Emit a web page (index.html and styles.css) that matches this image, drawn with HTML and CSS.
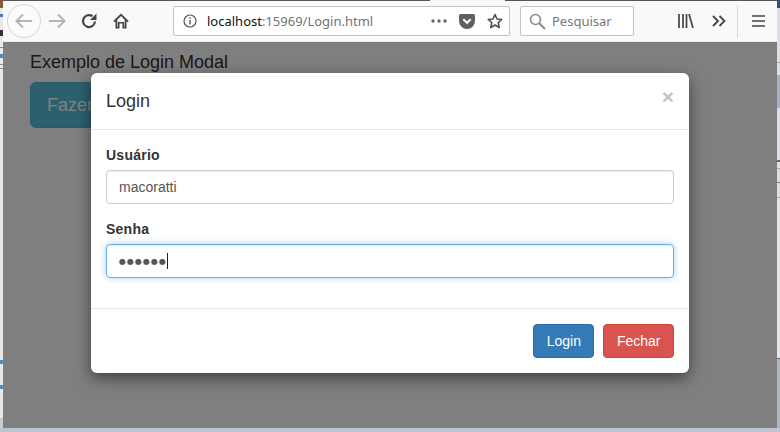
FILE: index.html
```html
<!DOCTYPE html>
<html lang="en">
<head>
  <meta charset="UTF-8" />
  <title>Login Modal</title>
  <link rel="stylesheet" href="styles.css">
</head>
<body>
  <div class="screen">
    <div class="edge-left"></div>

    <div class="window">
      <!-- browser toolbar -->
      <div class="tabline"><div class="tabline-tab"></div></div>
      <div class="toolbar">
        <div class="nav">
          <span class="back">
            <svg width="18" height="16" viewBox="0 0 18 16"><path d="M8 1.500 1.500 8 8 14.500M2 8h15" fill="none" stroke="#b4b4b6" stroke-width="2"/></svg>
          </span>
          <svg class="forward" width="17" height="16" viewBox="0 0 17 16"><path d="M9 1.500 15.500 8 9 14.500M15 8H0" fill="none" stroke="#b4b4b6" stroke-width="2"/></svg>
          <svg class="reload" width="16" height="16" viewBox="0 0 16 16"><path d="M14 8.500A6 6 0 1 1 11.500 3.200" fill="none" stroke="#444" stroke-width="2.200"/><path d="M15.500 0.500V7H9z" fill="#444"/></svg>
          <svg class="home" width="16" height="16" viewBox="0 0 16 16"><path d="M8 0.500 0.300 8l1.200 1.200L2.500 8.300V15.500H6.500V10.500H9.500V15.500H13.500V8.300l1 .9L15.700 8zM4.300 13.800V6.700L8 3l3.700 3.700v7.100h-.6V9H4.900v4.800z" fill="#444"/></svg>
        </div>

        <div class="urlbar">
          <svg class="info" width="14" height="14" viewBox="0 0 14 14"><circle cx="7" cy="7" r="6" fill="none" stroke="#555" stroke-width="1.200"/><rect x="6.300" y="6" width="1.400" height="4.500" fill="#555"/><rect x="6.300" y="3.400" width="1.400" height="1.500" fill="#555"/></svg>
          <span class="url">localhost<span class="url-rest">:15969/Login.html</span></span>
          <svg class="dots" width="16" height="4" viewBox="0 0 16 4"><circle cx="2" cy="2" r="1.700" fill="#666"/><circle cx="8" cy="2" r="1.700" fill="#666"/><circle cx="14" cy="2" r="1.700" fill="#666"/></svg>
          <svg class="pocket" width="16" height="15" viewBox="0 0 16 15"><path d="M1.500 0h13A1.500 1.500 0 0 1 16 1.500V7A8 8 0 0 1 0 7V1.500A1.500 1.500 0 0 1 1.500 0z" fill="#606062"/><path d="M4.300 5.300 8 8.800l3.700-3.500" fill="none" stroke="#fff" stroke-width="2"/></svg>
          <svg class="star" width="16" height="16" viewBox="0 0 16 16"><path d="M8 1.500 10 6l4.800.5-3.600 3.200 1 4.800L8 12l-4.200 2.500 1-4.800L1.200 6.500 6 6z" fill="none" stroke="#505052" stroke-width="1.600" stroke-linejoin="round"/></svg>
        </div>

        <div class="searchbar">
          <svg width="17" height="17" viewBox="0 0 17 17"><circle cx="6.500" cy="6.500" r="5" fill="none" stroke="#8c8c8e" stroke-width="1.600"/><path d="M10.300 10.300 16 16" stroke="#8c8c8e" stroke-width="2"/></svg>
          <span class="search-text">Pesquisar</span>
        </div>

        <div class="tools">
          <svg class="library" width="16" height="14" viewBox="0 0 16 14"><path d="M1 0v14M5 0v14M8.500 0v14M11 0l4 14" fill="none" stroke="#444" stroke-width="1.700"/></svg>
          <svg class="more" width="14" height="12" viewBox="0 0 14 12"><path d="M1 1l5 5-5 5M7.500 1l5 5-5 5" fill="none" stroke="#444" stroke-width="1.800"/></svg>
          <span class="sep"></span>
          <svg class="menu" width="13" height="12" viewBox="0 0 13 12"><path d="M0 1h13M0 6h13M0 11h13" stroke="#444" stroke-width="1.700"/></svg>
        </div>
      </div>

      <!-- page under the modal -->
      <div class="page">
        <h4 class="page-title">Exemplo de Login Modal</h4>
        <button class="btn-open" type="button">Fazer</button>

        <div class="overlay"></div>

        <div class="modal">
          <div class="modal-header">
            <h4 class="modal-title">Login</h4>
            <span class="close">×</span>
          </div>
          <div class="modal-body">
            <div class="form-group">
              <label>Usuário</label>
              <div class="input">macoratti</div>
            </div>
            <div class="form-group">
              <label>Senha</label>
              <div class="input input-focus"><span class="pwd">●●●●●●</span><span class="caret"></span></div>
            </div>
          </div>
          <div class="modal-footer">
            <button class="btn btn-login" type="button">Login</button>
            <button class="btn btn-close" type="button">Fechar</button>
          </div>
        </div>
      </div>
    </div>

    <div class="edge-right"></div>
  </div>
  <div class="edge-bottom"></div>
</body>
</html>
```

FILE: styles.css
```css
* {
  box-sizing: border-box;
}
html, body {
  margin: 0;
  height: 432px;
  overflow: hidden;
}
body {
  background-color: #bcc4d2;
  font-family: "Liberation Sans", Arial, sans-serif;
  font-size: 14px;
  color: #333;
}
.screen {
  display: flex;
  height: 428px;
}
.edge-left {
  width: 3px;
  background: linear-gradient(
    #8a5a3a 0 8px, #e8e8e8 8px 14px, #4a78b8 14px 17px, #e8e8e8 17px 30px,
    #333 30px 36px, #e8e8e8 36px 47px, #888 47px 48px, #e8e8e8 48px 54px,
    #4a90c8 54px 58px, #e8e8e8 58px 64px, #888 64px 65px, #e8e8e8 65px 68px,
    #888 68px 69px, #e8e8e8 69px 360px, #4a90c8 360px 364px, #e8e8e8 364px 385px,
    #4a90c8 385px 389px, #e8e8e8 389px 418px, #c8ccd4 418px
  );
}
.edge-right {
  width: 3px;
  background: linear-gradient(
    #2c4f8c 0 8px, #dcdfe4 8px 62px, #aaa 62px 63px, #dcdfe4 63px 75px,
    #a8b0c4 75px 108px, #dcdfe4 108px 160px, #666 160px 162px, #dcdfe4 162px 168px,
    #aaa 168px 169px, #dcdfe4 169px 182px, #777 182px 183px, #dcdfe4 183px 197px,
    #aaa 197px 198px, #e4e6ea 198px 358px, #666 358px 359px, #aeb6c4 359px
  );
}
.edge-bottom {
  height: 4px;
  background-color: #bcc4d2;
}
.window {
  width: 774px;
  display: flex;
  flex-direction: column;
}

/* toolbar */
.tabline {
  height: 1px;
  background-color: #555;
}
.tabline-tab {
  width: 75px;
  height: 1px;
  margin-left: 427px;
  background-color: #f5f5f5;
}
.toolbar {
  height: 41px;
  display: flex;
  align-items: center;
  background-color: #f9f9fa;
  border-bottom: 1px solid #efeff0;
}
.nav {
  display: flex;
  align-items: center;
  width: 170px;
  padding-left: 4px;
}
.back {
  width: 34px;
  height: 34px;
  display: flex;
  align-items: center;
  justify-content: center;
  background-color: #fbfbfb;
  border: 1px solid #d6d6d8;
  border-radius: 50%;
}
.forward {
  margin-left: 8px;
}
.reload {
  margin-left: 15px;
}
.home {
  margin-left: 16px;
}
.urlbar {
  width: 337px;
  height: 30px;
  display: flex;
  align-items: center;
  background-color: #fff;
  border: 1px solid #c4c4c6;
  border-radius: 2px;
  padding-left: 9px;
}
.url {
  font-family: "Noto Sans", sans-serif;
  font-size: 13px;
  margin-left: 10px;
  width: 224px;
  color: #111;
}
.url-rest {
  color: #737373;
}
.pocket {
  margin-left: 12px;
}
.star {
  margin-left: 12px;
}
.searchbar {
  width: 114px;
  height: 30px;
  display: flex;
  align-items: center;
  margin-left: 10px;
  padding-left: 8px;
  background-color: #fff;
  border: 1px solid #c4c4c6;
  border-radius: 2px;
}
.search-text {
  font-family: "Noto Sans", sans-serif;
  font-size: 13px;
  margin-left: 6px;
  color: #777;
}
.tools {
  display: flex;
  align-items: center;
  margin-left: 44px;
}
.more {
  margin-left: 18px;
}
.sep {
  width: 1px;
  height: 33px;
  margin-left: 11px;
  background-color: #d8d8da;
}
.menu {
  margin-left: 14px;
}

/* page */
.page {
  position: relative;
  flex: 1;
  background-color: #fff;
  padding: 10px 27px;
}
.page-title {
  margin: 0 0 10px;
  font-size: 18px;
  font-weight: 500;
  line-height: 20px;
}
.btn-open {
  width: 120px;
  height: 46px;
  padding: 0 16px;
  text-align: left;
  font-family: inherit;
  font-size: 18px;
  color: #fff;
  background-color: #5bc0de;
  border: 1px solid #46b8da;
  border-radius: 6px;
}
.overlay {
  position: absolute;
  inset: 0;
  background-color: rgba(0, 0, 0, 0.5);
}
.modal {
  position: absolute;
  left: 88px;
  top: 31px;
  width: 598px;
  height: 300px;
  display: flex;
  flex-direction: column;
  background-color: #fff;
  border-radius: 6px;
  box-shadow: 0 5px 15px rgba(0, 0, 0, 0.5);
}
.modal-header {
  height: 57px;
  display: flex;
  align-items: center;
  justify-content: space-between;
  padding: 0 15px;
  border-bottom: 1px solid #e5e5e5;
}
.modal-title {
  margin: 0;
  font-size: 18px;
  font-weight: 500;
}
.close {
  font-size: 21px;
  font-weight: bold;
  color: #c4c4c4;
  margin-bottom: 8px;
}
.modal-body {
  flex: 1;
  padding: 15px 15px 0;
}
.form-group {
  margin-bottom: 15px;
}
label {
  display: block;
  height: 25px;
  padding-top: 2px;
  font-weight: bold;
  letter-spacing: 0.25px;
}
.input {
  height: 34px;
  display: flex;
  align-items: center;
  padding: 0 12px;
  color: #555;
  background-color: #fff;
  border: 1px solid #ccc;
  border-radius: 4px;
  box-shadow: inset 0 1px 1px rgba(0, 0, 0, 0.075);
}
.input-focus {
  border-color: #66afe9;
  box-shadow: inset 0 1px 1px rgba(0, 0, 0, 0.075), 0 0 6px rgba(102, 175, 233, 0.6);
}
.pwd {
  font-family: "DejaVu Sans", sans-serif;
  font-size: 8px;
  letter-spacing: 1px;
  color: #555;
}
.caret {
  width: 1px;
  height: 16px;
  background-color: #222;
}
.modal-footer {
  height: 65px;
  display: flex;
  align-items: center;
  justify-content: flex-end;
  gap: 9px;
  padding: 0 15px;
  border-top: 1px solid #e5e5e5;
}
.btn {
  height: 34px;
  padding: 0 12.5px;
  font-family: inherit;
  font-size: 14px;
  color: #fff;
  border: 1px solid transparent;
  border-radius: 4px;
}
.btn-login {
  background-color: #337ab7;
  border-color: #2e6da4;
}
.btn-close {
  background-color: #d9534f;
  border-color: #d43f3a;
}
```
